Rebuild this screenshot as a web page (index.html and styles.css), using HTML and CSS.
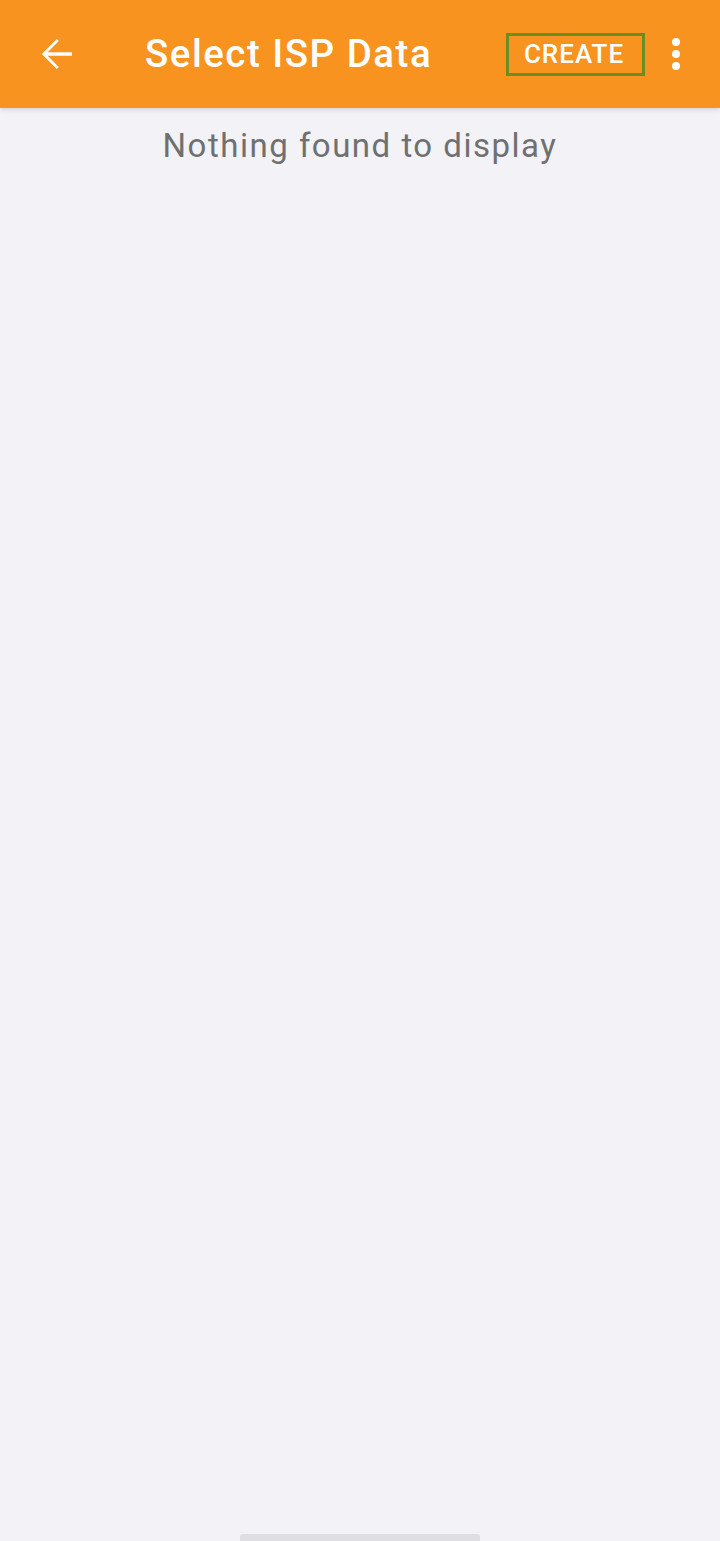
FILE: index.html
```html
<!DOCTYPE html>
<html lang="en">
<head>
<meta charset="utf-8">
<title>Select ISP Data</title>
<link rel="stylesheet" href="styles.css">
</head>
<body>
<div class="screen">
  <header class="appbar">
    <button class="icon-btn back" aria-label="Back">
      <svg viewBox="0 0 24 24" width="48" height="48"><path fill="#fff" d="M20 11.1H7.83l5.59-5.59L12.4 4.5l-7.5 7.5 7.5 7.5 1.01-1.01L7.83 12.9H20v-1.8z"/></svg>
    </button>
    <h1 class="title">Select ISP Data</h1>
    <button class="create">CREATE</button>
    <button class="icon-btn more" aria-label="More options">
      <svg viewBox="0 0 24 24" width="48" height="48"><circle cx="12" cy="6" r="2" fill="#fff"/><circle cx="12" cy="12" r="2" fill="#fff"/><circle cx="12" cy="18" r="2" fill="#fff"/></svg>
    </button>
  </header>
  <main class="content">
    <p class="empty">Nothing found to display</p>
  </main>
  <div class="home-indicator"></div>
</div>
</body>
</html>
```

FILE: styles.css
```css
* { box-sizing: border-box; }
html, body { margin: 0; padding: 0; }
body {
  width: 720px;
  height: 1541px;
  background: #f2f2f7;
  font-family: Roboto, "Noto Sans", sans-serif;
  overflow: hidden;
}
.screen {
  position: relative;
  height: 1541px;
  display: flex;
  flex-direction: column;
}
.appbar {
  height: 108px;
  background: #f7931e;
  display: flex;
  align-items: center;
  box-shadow: 0 2px 5px rgba(0,0,0,0.12);
  position: relative;
  z-index: 1;
}
.icon-btn {
  border: 0;
  background: transparent;
  padding: 0;
  width: 48px;
  height: 48px;
  display: flex;
}
.back { margin-left: 32px; }
.title {
  margin: 0 0 0 65px;
  color: #fff;
  font-size: 38.5px;
  font-weight: 500;
  letter-spacing: 1.5px;
  flex: 1;
  line-height: 1;
}
.create {
  width: 139px;
  height: 43px;
  border: 3px solid #6b8e23;
  background: transparent;
  color: #fff;
  font-family: Roboto, sans-serif;
  font-size: 26px;
  font-weight: 500;
  letter-spacing: 1px;
  padding: 0 3px 0 0;
  margin-right: 7px;
  line-height: 1;
}
.more { margin-right: 20px; }
.content {
  flex: 1;
  padding-top: 18px;
}
.empty {
  margin: 0;
  text-align: center;
  color: #707070;
  font-size: 33px;
  letter-spacing: 1.5px;
  line-height: 40px;
}
.home-indicator {
  position: absolute;
  left: 240px;
  bottom: 0;
  width: 240px;
  height: 7px;
  background: #dedee3;
  border-radius: 3px 3px 0 0;
}
```
